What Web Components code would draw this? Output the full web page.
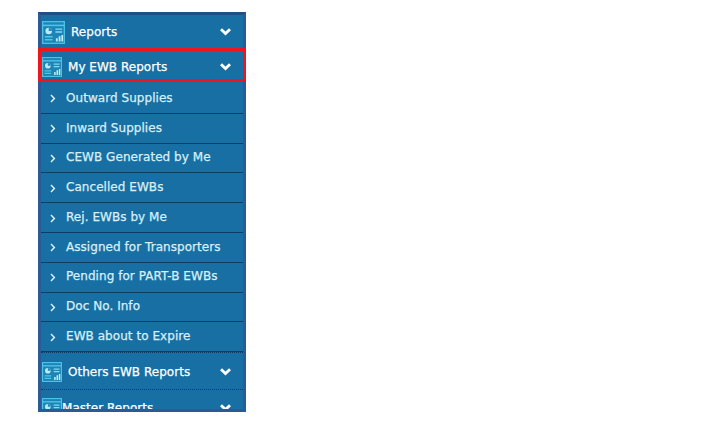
<!DOCTYPE html>
<html>
<head>
<meta charset="utf-8">
<style>
  html, body { margin: 0; background: #fff; }
  body { padding: 12px 0 0 38px; height: 410px; overflow: hidden; font-family: "DejaVu Sans", sans-serif; }
</style>
</head>
<body>
<template id="icon-def">
  <style>
    :host { display: block; flex: none; line-height: 0; }
  </style>
  <svg viewBox="0 0 24 24" width="100%" height="100%" fill="none">
    <rect x="0.7" y="0.7" width="22.6" height="22.6" fill="#1f83b4" stroke="#4cc6ea" stroke-width="1.3"/>
    <path d="M1 4.6H23" stroke="#4cc6ea" stroke-width="1.6"/>
    <circle cx="7" cy="10.5" r="3.4" fill="#b9ecf8"/>
    <path d="M7 10.5V7.1A3.4 3.4 0 0 1 10.4 10.5Z" fill="#2489b8"/>
    <path d="M14 8.5H21M14 11.5H21" stroke="#7fdcf3" stroke-width="1.5"/>
    <path d="M3 16.5H11M3 19.5H11" stroke="#4cc6ea" stroke-width="1.5"/>
    <path d="M14.5 21.5V18H16.4V21.5ZM17.4 21.5V16H19.3V21.5ZM20.2 21.5V14.5H22V21.5Z" fill="#b9ecf8"/>
  </svg>
</template>

<script>
class ReportIcon extends HTMLElement {
  constructor() {
    super();
    this.attachShadow({ mode: 'open' });
    this.shadowRoot.appendChild(document.getElementById('icon-def').content.cloneNode(true));
  }
}
customElements.define('report-icon', ReportIcon);

const menuHeadTemplate = document.createElement('template');
menuHeadTemplate.innerHTML = `
  <style>
    :host {
      display: flex;
      flex: none;
      align-items: center;
      position: relative;
      box-sizing: border-box;
      height: var(--row-h, 34px);
      padding-left: 1px;
      padding-top: var(--pad-t, 0px);
      color: #fff;
      font-size: 12px;
      letter-spacing: 0.03px;
      -webkit-text-stroke: 0.25px #fff;
    }
    :host([dotted]) {
      border-top: 1px dotted #0c3a5e;
      border-bottom: 1px dotted #0c3a5e;
    }
    :host([selected])::after {
      content: "";
      position: absolute;
      left: -3px;
      right: -3px;
      top: 0;
      bottom: 0;
      border: 3px solid #f0141e;
      pointer-events: none;
    }
    report-icon { width: var(--icon, 21px); height: var(--icon, 21px); }
    .label { margin-left: var(--gap, 6px); white-space: nowrap; flex: 1; }
    svg { margin-right: 11px; flex: none; }
  </style>
  <report-icon></report-icon>
  <span class="label"><slot></slot></span>
  <svg width="13" height="10" viewBox="0 0 13 10"><path d="M2 2.2L6.5 6.6L11 2.2" fill="none" stroke="#fff" stroke-width="2.8"/></svg>
`;

class MenuHead extends HTMLElement {
  constructor() {
    super();
    this.attachShadow({ mode: 'open' });
    this.shadowRoot.appendChild(menuHeadTemplate.content.cloneNode(true));
  }
}
customElements.define('menu-head', MenuHead);

const menuItemTemplate = document.createElement('template');
menuItemTemplate.innerHTML = `
  <style>
    :host {
      display: flex;
      flex: none;
      align-items: center;
      box-sizing: border-box;
      height: var(--row-h, 29.8px);
      padding: var(--pad-t, 0px) 0 0 9px;
      color: #d8f0f8;
      font-size: 12px;
      letter-spacing: 0.05px;
      border-bottom: 1px solid #0d3c61;
      -webkit-text-stroke: 0.25px #d8f0f8;
    }
    svg { margin-right: 10px; margin-top: 1px; flex: none; }
    span { white-space: nowrap; margin-bottom: 1.4px; }
  </style>
  <svg width="6" height="9" viewBox="0 0 6 9"><path d="M1 1L4.4 4.5L1 8" fill="none" stroke="#e4f5fa" stroke-width="1.4"/></svg>
  <span><slot></slot></span>
`;

class MenuItem extends HTMLElement {
  constructor() {
    super();
    this.attachShadow({ mode: 'open' });
    this.shadowRoot.appendChild(menuItemTemplate.content.cloneNode(true));
  }
}
customElements.define('menu-item', MenuItem);

const sideMenuTemplate = document.createElement('template');
sideMenuTemplate.innerHTML = `
  <style>
    :host {
      display: block;
      box-sizing: border-box;
      width: 208px;
      height: 400px;
      background: #176fa3;
      border: 3px solid #2b5b95;
      border-top-color: #1f4f86;
    }
    /* cut the last row at the frame, but let the red selection sit over the sides */
    .wrap {
      display: flex;
      flex-direction: column;
      height: 100%;
      clip-path: inset(-4px -4px 0 -4px);
    }
  </style>
  <div class="wrap"><slot></slot></div>
`;

class SideMenu extends HTMLElement {
  constructor() {
    super();
    this.attachShadow({ mode: 'open' });
    this.shadowRoot.appendChild(sideMenuTemplate.content.cloneNode(true));
  }
}
customElements.define('side-menu', SideMenu);
</script>

<side-menu>
  <menu-head style="--icon:23px;--row-h:33px;--pad-t:1px">Reports</menu-head>
  <menu-head selected style="--icon:20px;--pad-t:4px">My EWB Reports</menu-head>
  <menu-item style="--row-h:31.8px;--pad-t:2px">Outward Supplies</menu-item>
  <menu-item>Inward Supplies</menu-item>
  <menu-item>CEWB Generated by Me</menu-item>
  <menu-item>Cancelled EWBs</menu-item>
  <menu-item>Rej. EWBs by Me</menu-item>
  <menu-item>Assigned for Transporters</menu-item>
  <menu-item>Pending for PART-B EWBs</menu-item>
  <menu-item>Doc No. Info</menu-item>
  <menu-item>EWB about to Expire</menu-item>
  <menu-head dotted style="--icon:20px;--row-h:38px;--pad-t:2px">Others EWB Reports</menu-head>
  <menu-head style="--icon:20px;--gap:0px;--row-h:34px;--pad-t:2px">Master Reports</menu-head>
</side-menu>
</body>
</html>
